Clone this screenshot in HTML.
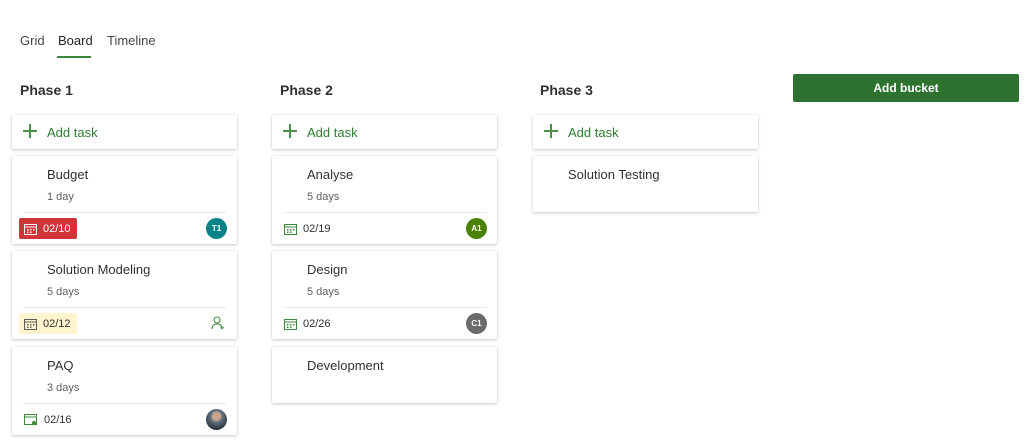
<!DOCTYPE html>
<html><head><style>
*{box-sizing:border-box;margin:0;padding:0}
body{width:1024px;height:447px;background:#fff;font-family:"Liberation Sans",sans-serif;color:#323130;position:relative;overflow:hidden}
.tab{position:absolute;top:33px;font-size:13px;color:#484644}
.col{position:absolute;width:225px}
.ph{position:absolute;top:82px;font-size:14px;font-weight:bold;color:#323130}
.card{position:absolute;left:0;width:225px;background:#fff;border-radius:2px;box-shadow:0 1px 3px rgba(0,0,0,.22),0 0 1px rgba(0,0,0,.12)}
.add{top:115px;height:34px}
.add span{position:absolute;left:35px;top:10px;font-size:13px;color:#2e7d32}
.add i{position:absolute;left:11px;top:9px;width:14px;height:14px}
.add i:before{content:"";position:absolute;left:6px;top:0;width:1.5px;height:14px;background:#4a8f4a}
.add i:after{content:"";position:absolute;top:6px;left:0;height:1.5px;width:14px;background:#4a8f4a}
.t{position:absolute;left:35px;top:11px;font-size:13px;color:#323130}
.s{position:absolute;left:35px;top:35px;font-size:11px;color:#605e5c}
.dv{position:absolute;left:11px;right:11px;top:56px;height:1px;background:#edebe9}
.dt{position:absolute;left:7px;top:62px;height:21px;padding:0 6px 0 5px;display:flex;align-items:center;font-size:11px;color:#323130;border-radius:2px}
.dt svg{margin-right:6px}
.av{position:absolute;right:10px;top:62px;width:21px;height:21px;border-radius:50%;color:#fff;font-size:8px;font-weight:bold;display:flex;align-items:center;justify-content:center}
</style></head><body>
<div class="tab" style="left:20px">Grid</div>
<div class="tab" style="left:58px;color:#252423">Board</div>
<div style="position:absolute;left:57px;top:56px;width:34px;height:2px;background:#3a8a3a"></div>
<div class="tab" style="left:107px">Timeline</div>

<div class="ph" style="left:20px">Phase 1</div>
<div class="ph" style="left:280px">Phase 2</div>
<div class="ph" style="left:540px">Phase 3</div>
<div style="position:absolute;left:793px;top:74px;width:226px;height:28px;background:#2e7230;color:#fff;font-size:12px;font-weight:bold;display:flex;align-items:center;justify-content:center;border-radius:2px">Add bucket</div>

<div class="col" style="left:12px">
<div class="card add"><i></i><span>Add task</span></div>
<div class="card" style="top:156px;height:88px"><div class="t">Budget</div><div class="s">1 day</div><div class="dv"></div>
<div class="dt" style="background:#d13438;color:#fff"><svg width="13" height="12" viewBox="0 0 13 12"><rect x=".5" y="1.5" width="12" height="10" fill="none" stroke="#fff"/><line x1="1" y1="4" x2="12" y2="4" stroke="#fff"/><g fill="#fff"><rect x="3" y="6" width="1.5" height="1.5"/><rect x="6" y="6" width="1.5" height="1.5"/><rect x="9" y="6" width="1.5" height="1.5"/><rect x="3" y="8.5" width="1.5" height="1.5"/><rect x="6" y="8.5" width="1.5" height="1.5"/></g></svg>02/10</div>
<div class="av" style="background:#038387">T1</div></div>
<div class="card" style="top:251px;height:88px"><div class="t">Solution Modeling</div><div class="s">5 days</div><div class="dv"></div>
<div class="dt" style="background:#fff4ce"><svg width="13" height="12" viewBox="0 0 13 12"><rect x=".5" y="1.5" width="12" height="10" fill="none" stroke="#605e5c"/><line x1="1" y1="4" x2="12" y2="4" stroke="#605e5c"/><g fill="#605e5c"><rect x="3" y="6" width="1.5" height="1.5"/><rect x="6" y="6" width="1.5" height="1.5"/><rect x="9" y="6" width="1.5" height="1.5"/><rect x="3" y="8.5" width="1.5" height="1.5"/><rect x="6" y="8.5" width="1.5" height="1.5"/></g></svg>02/12</div>
<svg style="position:absolute;right:12px;top:65px" width="14" height="14" viewBox="0 0 14 14" fill="none" stroke="#3a8a3a" stroke-width="1.1"><circle cx="6" cy="4" r="3"/><path d="M1 13c0-3 2-5 5-5s4 1 5 3"/><path d="M11 10v3.5M9.3 11.8h3.5"/></svg></div>
<div class="card" style="top:347px;height:88px"><div class="t">PAQ</div><div class="s">3 days</div><div class="dv"></div>
<div class="dt"><svg width="14" height="13" viewBox="0 0 14 13" fill="none" stroke="#3a8a3a"><rect x=".5" y="1.5" width="12" height="10"/><line x1="1" y1="4" x2="12" y2="4"/><circle cx="10" cy="10" r="1.5" fill="#3a8a3a"/></svg>02/16</div>
<div class="av" style="background:radial-gradient(circle at 50% 35%,#c9a58c 0 25%,#6b7a86 30%,#2f3a44 70%)"></div></div>
</div>

<div class="col" style="left:272px">
<div class="card add"><i></i><span>Add task</span></div>
<div class="card" style="top:156px;height:88px"><div class="t">Analyse</div><div class="s">5 days</div><div class="dv"></div>
<div class="dt"><svg width="13" height="12" viewBox="0 0 13 12"><rect x=".5" y="1.5" width="12" height="10" fill="none" stroke="#3a8a3a"/><line x1="1" y1="4" x2="12" y2="4" stroke="#3a8a3a"/><g fill="#3a8a3a"><rect x="3" y="6" width="1.5" height="1.5"/><rect x="6" y="6" width="1.5" height="1.5"/><rect x="9" y="6" width="1.5" height="1.5"/><rect x="3" y="8.5" width="1.5" height="1.5"/><rect x="6" y="8.5" width="1.5" height="1.5"/></g></svg>02/19</div>
<div class="av" style="background:#498205">A1</div></div>
<div class="card" style="top:251px;height:88px"><div class="t">Design</div><div class="s">5 days</div><div class="dv"></div>
<div class="dt"><svg width="13" height="12" viewBox="0 0 13 12"><rect x=".5" y="1.5" width="12" height="10" fill="none" stroke="#3a8a3a"/><line x1="1" y1="4" x2="12" y2="4" stroke="#3a8a3a"/><g fill="#3a8a3a"><rect x="3" y="6" width="1.5" height="1.5"/><rect x="6" y="6" width="1.5" height="1.5"/><rect x="9" y="6" width="1.5" height="1.5"/><rect x="3" y="8.5" width="1.5" height="1.5"/><rect x="6" y="8.5" width="1.5" height="1.5"/></g></svg>02/26</div>
<div class="av" style="background:#6b6b6b">C1</div></div>
<div class="card" style="top:347px;height:56px"><div class="t">Development</div></div>
</div>

<div class="col" style="left:533px">
<div class="card add"><i></i><span>Add task</span></div>
<div class="card" style="top:156px;height:56px"><div class="t">Solution Testing</div></div>
</div>
</body></html>
